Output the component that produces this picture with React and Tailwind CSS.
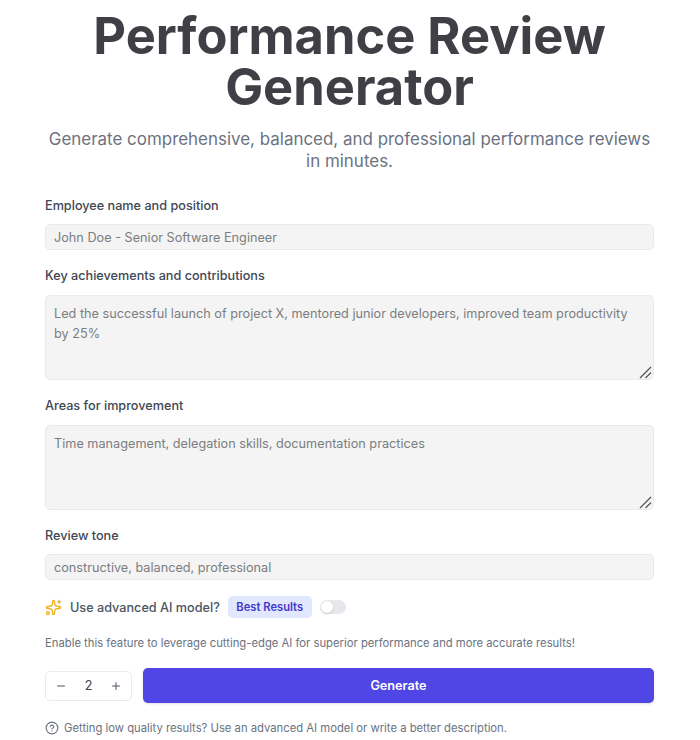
import { useState } from 'react'
import { Sparkles, CircleHelp, Minus, Plus } from 'lucide-react'

const fieldClass =
  'block w-full rounded-[5px] border border-[#e9eaec] bg-[#f4f4f4] pl-2 text-[12.7px] text-[#6b7280] placeholder:text-[#7b7d80] outline-none'

const Label = ({ children, className = '' }) => (
  <label className={`block text-[12.67px] leading-5 font-medium text-[#3f4753] ${className}`}>{children}</label>
)

const TextArea = ({ placeholder }) => (
  <div className="relative mt-[9px]">
    <textarea className={`${fieldClass} h-[85px] resize-none py-2 pr-6 leading-5`} placeholder={placeholder} />
    <svg className="absolute right-[1px] bottom-[1px] h-[14px] w-[14px] text-[#555]" viewBox="0 0 14 14" fill="none" stroke="currentColor" strokeWidth="1.3">
      <path d="M1 13 L12 2" />
      <path d="M6.5 13 L12 7.5" />
    </svg>
  </div>
)

const App = () => {
  const [count, setCount] = useState(2)
  const [advanced, setAdvanced] = useState(false)

  return (
    <div className="h-[740px] overflow-hidden bg-white font-['Inter',sans-serif]">
      <div className="pt-[10px] pr-[46px] pl-[45px]">
        <h1 className="text-center text-[50.6px] leading-[51px] font-bold text-[#3f3f46]">
          Performance Review Generator
        </h1>
        <p className="mt-[16px] text-center text-[16.95px] leading-[22px] text-[#6b7280]">
          Generate comprehensive, balanced, and professional performance reviews in minutes.
        </p>

        <Label className="mt-[24px]">Employee name and position</Label>
        <input
          className={`${fieldClass} mt-2 h-[26px]`}
          placeholder="John Doe - Senior Software Engineer"
        />

        <Label className="mt-[16px]">Key achievements and contributions</Label>
        <TextArea placeholder="Led the successful launch of project X, mentored junior developers, improved team productivity by 25%" />

        <Label className="mt-[16px]">Areas for improvement</Label>
        <TextArea placeholder="Time management, delegation skills, documentation practices" />

        <Label className="mt-[16px]">Review tone</Label>
        <input
          className={`${fieldClass} mt-2 h-[26px]`}
          placeholder="constructive, balanced, professional"
        />

        <div className="mt-[16px] flex h-[22px] items-center">
          <Sparkles size={17} strokeWidth={2} className="text-[#f0b429]" />
          <span className="ml-2 text-[12.67px] font-medium text-[#4b5563]">Use advanced AI model?</span>
          <span className="ml-2 rounded-[5px] bg-[#e0e7ff] px-[8.5px] py-[3px] text-[11.2px] font-semibold text-[#4338ca]">
            Best Results
          </span>
          <button
            type="button"
            onClick={() => setAdvanced(!advanced)}
            className={`ml-2 flex h-[14px] w-[26px] items-center rounded-full p-[1px] ${advanced ? 'justify-end bg-[#4f46e5]' : 'bg-[#e5e7eb]'}`}
          >
            <span className="h-3 w-3 rounded-full bg-white shadow" />
          </button>
        </div>

        <p className="mt-[17px] text-[11.27px] leading-4 text-[#6b7280]">
          Enable this feature to leverage cutting-edge AI for superior performance and more accurate results!
        </p>

        <div className="mt-[17px] flex items-center gap-[11px]">
          <div className="flex h-[30px] w-[87px] items-center justify-between rounded-[5px] border border-[#e9eaec] bg-white px-[9px] text-[12.67px] text-[#374151]">
            <button type="button" onClick={() => setCount(count - 1)} className="text-[#4b5563]">
              <Minus size={12} />
            </button>
            <span>{count}</span>
            <button type="button" onClick={() => setCount(count + 1)} className="text-[#4b5563]">
              <Plus size={12} />
            </button>
          </div>
          <button
            type="button"
            className="h-[35px] flex-1 rounded-[5px] bg-[#4f46e5] text-[12.67px] font-semibold text-white shadow-sm"
          >
            Generate
          </button>
        </div>

        <div className="mt-[17px] flex items-center gap-[5px] text-[11.27px] text-[#6b7280]">
          <CircleHelp size={14} className="text-[#6b7280]" />
          <span>Getting low quality results? Use an advanced AI model or write a better description.</span>
        </div>
      </div>
    </div>
  )
}

export default App
